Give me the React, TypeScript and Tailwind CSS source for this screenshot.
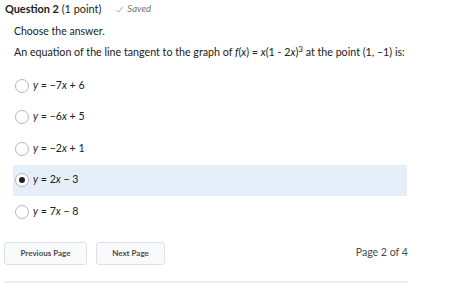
const OPTIONS = [
  { pre: "= \u22127", post: " + 6", selected: false },
  { pre: "= \u22126", post: " + 5", selected: false },
  { pre: "= \u22122", post: " + 1", selected: false },
  { pre: "= 2", post: " \u2212 3", selected: true },
  { pre: "= 7", post: " \u2212 8", selected: false },
];

export default function App() {
  return (
    <div className="w-[474px] h-[285px] bg-white overflow-hidden font-['Lato','Liberation_Sans',sans-serif] text-[#202122]">
      {/* Header */}
      <div className="flex items-center gap-[14px] pl-[5px] h-[18px]">
        <div className="text-[10.9px] leading-none">
          <span className="font-bold">Question 2</span> (1 point)
        </div>
        <div className="flex items-center gap-[3px] text-[9.5px] italic text-[#6e7477]">
          <svg width="9" height="9" viewBox="0 0 10 10" fill="none">
            <path d="M1.5 5.5 L4 8 L8.5 2" stroke="#a7acaf" strokeWidth="1.1" />
          </svg>
          Saved
        </div>
      </div>

      <div className="pl-[14px]">
        <p className="text-[10.5px] mt-[5px] leading-[16px]">Choose the answer.</p>
        <p className="text-[10.7px] mt-[5px] leading-[16px] whitespace-nowrap">
          An equation of the line tangent to the graph of <i>f</i>(<i>x</i>) = <i>x</i>(1 - 2<i>x</i>)
          <sup className="text-[8px]">3</sup> at the point (1, &minus;1) is:
        </p>

        {/* Options */}
        <div className="mt-[10px] w-[394px] -ml-[1px] flex flex-col">
          {OPTIONS.map((o, i) => (
            <div
              key={i}
              className={`flex items-center gap-[4px] h-[31.5px] pl-[2px] text-[10.6px] ${o.selected ? "bg-[#e6eff9]" : ""}`}
            >
              <span className="w-[14px] h-[14px] rounded-full border border-[#b3b8bb] bg-white flex items-center justify-center">
                {o.selected && <span className="w-[6px] h-[6px] rounded-full bg-[#202122]" />}
              </span>
              <span>
                <i>y</i> {o.pre}
                <i>x</i>
                {o.post}
              </span>
            </div>
          ))}
        </div>
      </div>

      {/* Footer */}
      <div className="flex items-center mt-[14px] pl-[4px] w-[408px]">
        <button className="h-[23px] w-[83px] rounded-[3px] border border-[#dfe2e4] bg-[#f9fafb] text-[8px] font-bold text-[#494c4e]">
          Previous Page
        </button>
        <button className="ml-[9px] h-[23px] w-[69px] rounded-[3px] border border-[#dfe2e4] bg-[#f9fafb] text-[8px] font-bold text-[#494c4e]">
          Next Page
        </button>
        <span className="ml-auto text-[10.6px] text-[#494c4e]">Page 2 of 4</span>
      </div>
      <div className="ml-[4px] mt-[16px] w-[404px] h-[2px] bg-[#eceef0]" />
    </div>
  );
}
